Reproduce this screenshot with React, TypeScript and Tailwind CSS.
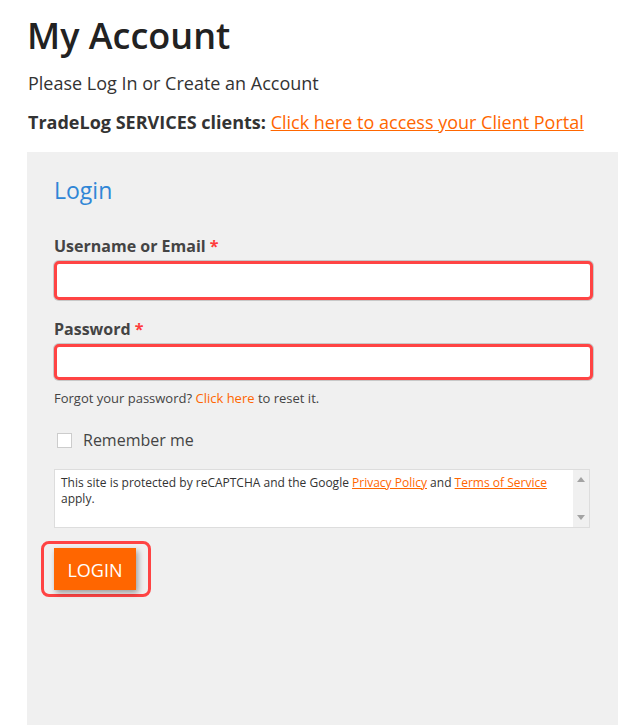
export default function App() {
  return (
    <div className="min-h-screen flex flex-col bg-white pl-[28px] pr-[10px] font-['Open_Sans',sans-serif] text-[#333]">
      {/* Header */}
      <h1 className="pt-[14px] -ml-px text-[36px] leading-[44px] font-semibold text-[#222]">My Account</h1>
      <p className="mt-[13px] text-[18px] leading-[24px] text-[#333]">Please Log In or Create an Account</p>
      <p className="mt-[15px] text-[18px] leading-[24px] text-[#333]">
        <span className="font-bold">TradeLog SERVICES clients:</span>{" "}
        <a href="#" className="text-[#ff6600] underline">
          Click here to access your Client Portal
        </a>
      </p>

      {/* Login panel */}
      <div className="mt-[18px] -ml-px flex-1 w-[591px] bg-[#f0f0f0] pl-[27px] pr-[25px] pt-[22px]">
        <h2 className="text-[23px] leading-[32px] text-[#2f86d6]">Login</h2>

        <label className="block mt-[29px] text-[16px] leading-[22px] font-bold text-[#444]">
          Username or Email <span className="text-[#ff3b3b]">*</span>
        </label>
        <input
          type="text"
          className="block mt-[4px] w-[539px] h-[39px] bg-white border-[3px] border-[#ff4444] rounded-[5px] shadow-[0_0_0_1px_#c8c8c8] outline-none"
        />

        <label className="block mt-[18px] text-[16px] leading-[22px] font-bold text-[#444]">
          Password <span className="text-[#ff3b3b]">*</span>
        </label>
        <input
          type="password"
          className="block mt-[4px] w-[539px] h-[36px] bg-white border-[3px] border-[#ff4444] rounded-[5px] shadow-[0_0_0_1px_#c8c8c8] outline-none"
        />

        <p className="mt-[9px] text-[13px] leading-[18px] text-[#444]">
          Forgot your password? <a href="#" className="text-[#ff6600]">Click here</a> to reset it.
        </p>

        <div className="mt-[21px] flex items-center h-[24px]">
          <span className="ml-[3px] w-[15px] h-[15px] bg-white border border-[#cccccc]" />
          <span className="ml-[11px] text-[16px] leading-[24px] text-[#444]">Remember me</span>
        </div>

        {/* reCAPTCHA notice */}
        <div className="mt-[17px] w-[536px] h-[59px] flex bg-white border border-[#dddddd]">
          <p className="flex-1 pl-[6px] pt-[5px] pr-[4px] text-[12px] leading-[16px] text-[#333]">
            This site is protected by reCAPTCHA and the Google{" "}
            <a href="#" className="text-[#ff6600] underline">Privacy Policy</a> and{" "}
            <a href="#" className="text-[#ff6600] underline">Terms of Service</a> apply.
          </p>
          <div className="w-[16px] bg-[#f0f0f0] flex flex-col items-center justify-between py-[7px]">
            <span className="w-0 h-0 border-l-[4px] border-r-[4px] border-b-[5px] border-l-transparent border-r-transparent border-b-[#a3a3a3]" />
            <span className="w-0 h-0 border-l-[4px] border-r-[4px] border-t-[5px] border-l-transparent border-r-transparent border-t-[#a3a3a3]" />
          </div>
        </div>

        {/* Login button with focus ring */}
        <div className="mt-[13px] -ml-[13px] inline-flex border-[3px] border-[#ff4444] rounded-[8px] pl-[10px] pr-[12px] py-[4px]">
          <button className="w-[82px] h-[42px] pt-px bg-[#ff6600] text-white text-[18px] leading-[24px] shadow-[2px_3px_6px_rgba(0,0,0,0.35)]">
            LOGIN
          </button>
        </div>
      </div>
    </div>
  );
}
